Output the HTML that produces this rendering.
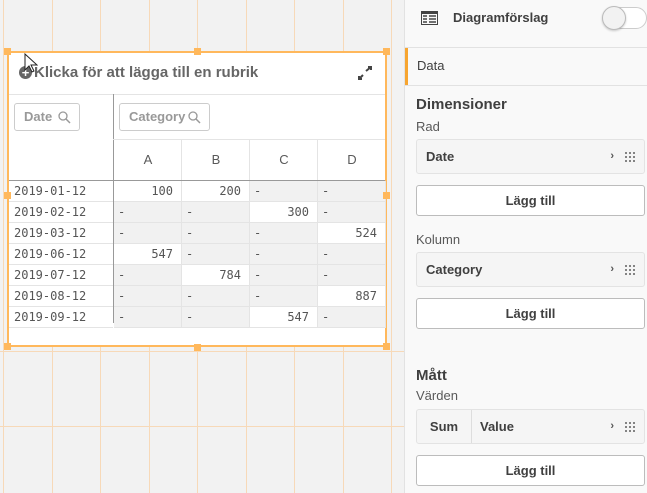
<!DOCTYPE html>
<html><head><meta charset="utf-8"><style>
*{box-sizing:border-box;margin:0;padding:0}
body{width:647px;height:493px;overflow:hidden;background:#f2f2f2;font-family:"Liberation Sans",sans-serif;position:relative;color:#595959}
.vl{position:absolute;top:0;bottom:0;width:1px;background:#f7d9b8}
.hl{position:absolute;left:0;width:404px;height:1px;background:#f7d9b8}
#chart{position:absolute;left:7px;top:51px;width:380px;height:296px;background:#fff;border:2px solid #ffb85c}
.h{position:absolute;width:7px;height:7px;background:#ffb85c}
.ab{position:absolute}
.mono{font-family:"DejaVu Sans Mono","Liberation Mono",monospace;font-size:12px;color:#555}
.cell{position:absolute;height:21px;line-height:21px;border-right:1px solid #e4e4e4;border-bottom:1px solid #e4e4e4}
.fb{position:absolute;height:28px;border:1px solid #ccc;border-radius:3px;font-weight:bold;font-size:13px;color:#999;line-height:26px;padding-left:9px}
.fb svg{position:absolute;right:8px;top:7px}
#panel{position:absolute;left:404px;top:0;width:243px;height:493px;background:#f9f9f9;border-left:1px solid #e2e2e2}
.item{position:absolute;left:11px;width:229px;height:35px;border:1px solid #e3e3e3;border-radius:3px;background:#f5f5f5;font-weight:bold;font-size:13px;color:#404040;line-height:33px;padding-left:9px}
.btn{position:absolute;left:11px;width:229px;height:31px;border:1px solid #bcbcbc;border-radius:3px;background:#fff;font-weight:bold;font-size:13px;color:#404040;text-align:center;line-height:29px}
.dots{position:absolute;right:8px;top:11px;width:12px;height:12px;background-image:radial-gradient(circle,#666 0.9px,transparent 1.1px);background-size:4px 4px}
.chev{position:absolute;right:30px;top:0;font-size:11px;color:#555}
</style></head><body>
<div class="vl" style="left:3px"></div><div class="vl" style="left:52px"></div><div class="vl" style="left:100px"></div><div class="vl" style="left:149px"></div><div class="vl" style="left:197px"></div><div class="vl" style="left:246px"></div><div class="vl" style="left:294px"></div><div class="vl" style="left:343px"></div><div class="vl" style="left:391px"></div>
<div class="hl" style="top:351px"></div><div class="hl" style="top:426px"></div>
<div id="chart">
<div class="ab" style="left:10px;top:13px;width:13px;height:13px;border-radius:50%;background:#666;color:#fff;font-size:13px;line-height:13px;text-align:center;font-weight:bold">+</div>
<div class="ab" style="left:25px;top:11px;font-weight:bold;font-size:15px;color:#666">Klicka för att lägga till en rubrik</div>
<svg class="ab" style="left:348px;top:13px" width="16" height="14"><path d="M9 5L14 1M11 1h3v3M6 9L2 13M2 10v3h3" stroke="#444" stroke-width="2" fill="none"/></svg>
<div class="ab" style="left:0;top:41px;width:376px;height:1px;background:#e4e4e4"></div>
<div class="ab" style="left:104px;top:41px;width:1px;height:229px;background:#999"></div>
<div class="ab" style="left:104px;top:86px;width:272px;height:1px;background:#e4e4e4"></div>
<div class="ab" style="left:0;top:127px;width:376px;height:1px;background:#999"></div>
<div class="fb" style="left:5px;top:50px;width:66px">Date <svg width="13" height="13"><circle cx="5" cy="5" r="4" fill="none" stroke="#999" stroke-width="1.3"/><path d="M8 8l4 4" stroke="#999" stroke-width="1.5"/></svg></div>
<div class="fb" style="left:110px;top:50px;width:91px">Category <svg width="13" height="13"><circle cx="5" cy="5" r="4" fill="none" stroke="#999" stroke-width="1.3"/><path d="M8 8l4 4" stroke="#999" stroke-width="1.5"/></svg></div>
<div class="ab" style="left:172px;top:87px;width:1px;height:40px;background:#e4e4e4"></div>
<div class="ab" style="left:240px;top:87px;width:1px;height:40px;background:#e4e4e4"></div>
<div class="ab" style="left:308px;top:87px;width:1px;height:40px;background:#e4e4e4"></div>
<div class="ab" style="left:105px;top:99px;width:68px;text-align:center;font-size:13px">A</div>
<div class="ab" style="left:173px;top:99px;width:68px;text-align:center;font-size:13px">B</div>
<div class="ab" style="left:241px;top:99px;width:68px;text-align:center;font-size:13px">C</div>
<div class="ab" style="left:309px;top:99px;width:68px;text-align:center;font-size:13px">D</div>
<div id="rows"></div>
</div>
<div class="h" style="left:4px;top:48px"></div><div class="h" style="left:194px;top:48px"></div><div class="h" style="left:383px;top:48px"></div>
<div class="h" style="left:4px;top:192px"></div><div class="h" style="left:383px;top:192px"></div>
<div class="h" style="left:4px;top:343px"></div><div class="h" style="left:194px;top:344px"></div><div class="h" style="left:383px;top:343px"></div>
<svg class="ab" style="left:24px;top:53px" width="14" height="22"><path d="M1 1v16l4-4 3 6 2-1-3-6h6z" fill="#fff" stroke="#222"/></svg>
<div id="panel">
<svg class="ab" style="left:16px;top:11px" width="17" height="14"><rect x="0.5" y="0.5" width="16" height="13" fill="none" stroke="#444"/><rect x="0" y="0" width="17" height="3" fill="#444"/><path d="M2 5h4M8 5h7M2 8h4M8 8h7M2 11h4M8 11h7" stroke="#444" stroke-width="1.5"/></svg>
<div class="ab" style="left:48px;top:10px;font-weight:bold;font-size:13px;color:#404040">Diagramförslag</div>
<div class="ab" style="left:198px;top:7px;width:44px;height:22px;border-radius:11px;background:#fff;border:1px solid #ccc"></div>
<div class="ab" style="left:197px;top:6px;width:24px;height:24px;border-radius:50%;background:#f2f2f2;border:1px solid #bbb;box-shadow:0 1px 2px rgba(0,0,0,.2)"></div>
<div class="ab" style="left:0;top:47px;width:243px;height:1px;background:#e2e2e2"></div>
<div class="ab" style="left:0;top:48px;width:3px;height:37px;background:#f7a530"></div>
<div class="ab" style="left:12px;top:58px;font-size:13px;color:#404040">Data</div>
<div class="ab" style="left:0;top:85px;width:243px;height:1px;background:#e2e2e2"></div>
<div class="ab" style="left:11px;top:96px;font-weight:bold;font-size:15px;color:#404040">Dimensioner</div>
<div class="ab" style="left:11px;top:119px;font-size:13px;color:#595959">Rad</div>
<div class="item" style="top:139px">Date<span class="chev">›</span><span class="dots"></span></div>
<div class="btn" style="top:185px">Lägg till</div>
<div class="ab" style="left:11px;top:232px;font-size:13px">Kolumn</div>
<div class="item" style="top:252px">Category<span class="chev">›</span><span class="dots"></span></div>
<div class="btn" style="top:298px">Lägg till</div>
<div class="ab" style="left:11px;top:367px;font-weight:bold;font-size:15px;color:#404040">Mått</div>
<div class="ab" style="left:11px;top:388px;font-size:13px">Värden</div>
<div class="item" style="top:409px;padding-left:0"><span style="display:inline-block;width:55px;text-align:center;border-right:1px solid #ddd">Sum</span><span style="padding-left:8px">Value</span><span class="chev">›</span><span class="dots"></span></div>
<div class="btn" style="top:455px">Lägg till</div>
</div>
<script>
var d=[["2019-01-12",["100","200","",""]],["2019-02-12",["","","300",""]],["2019-03-12",["","","","524"]],["2019-06-12",["547","","",""]],["2019-07-12",["","784","",""]],["2019-08-12",["","","","887"]],["2019-09-12",["","","547",""]]];
var h="";d.forEach(function(r,i){var t=128+i*21;h+='<div class="cell mono" style="left:0;top:'+t+'px;width:104px;padding-left:5px;border-right:none">'+r[0]+'</div>';
r[1].forEach(function(v,j){var l=105+j*68;h+='<div class="cell mono" style="left:'+l+'px;top:'+t+'px;width:68px;'+(v?'background:#fff;text-align:right;padding-right:8px':'background:#f1f1f1;padding-left:4px')+'">'+(v||'-')+'</div>';});});
document.getElementById('rows').innerHTML=h;
</script>
</body></html>
